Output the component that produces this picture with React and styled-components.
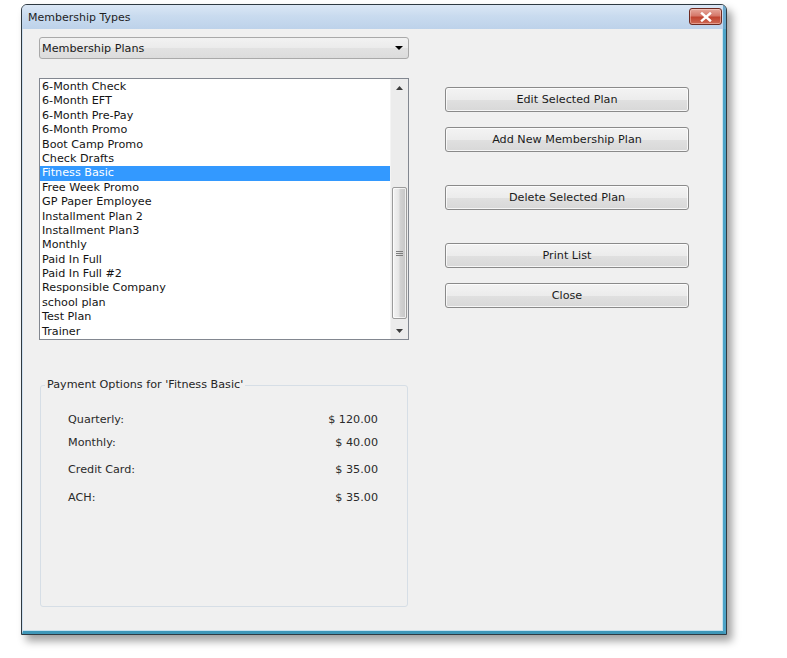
import React from "react";
import styled, { createGlobalStyle } from "styled-components";

const GlobalStyle = createGlobalStyle`
  html, body { margin: 0; padding: 0; background: #ffffff; }
  body { font-family: "DejaVu Sans", "Liberation Sans", sans-serif; }
  * { box-sizing: border-box; }
`;

const Page = styled.div`
  padding: 4px 0 0 21px;
  width: 787px;
  height: 658px;
`;

const Window = styled.div`
  width: 706px;
  height: 631px;
  border: 1px solid #2f3a42;
  border-radius: 6px 6px 0 0;
  background: #c9dcee;
  box-shadow: 5px 6px 9px rgba(0, 0, 0, 0.38);
  display: flex;
  flex-direction: column;
  overflow: hidden;
`;

const TitleBar = styled.div`
  height: 24px;
  flex: none;
  display: flex;
  align-items: flex-start;
  justify-content: space-between;
  padding: 3px 1px 0 6px;
  background: linear-gradient(#dbe7f5 0%, #c9dbef 45%, #bdd2ea 100%);
  border-right: 3px solid #6aa8cc;
`;

const Title = styled.span`
  font-size: 11px;
  line-height: 17px;
  padding-top: 1px;
  color: #1e1e1e;
`;

const CloseButton = styled.div`
  width: 33px;
  height: 17px;
  border: 1px solid #6e2a20;
  border-radius: 3px;
  background: linear-gradient(#e6a89c 0%, #d5786a 45%, #c04431 55%, #cf6a55 100%);
  box-shadow: inset 0 0 0 1px rgba(255, 220, 210, 0.45);
  display: flex;
  align-items: center;
  justify-content: center;
`;

const Frame = styled.div`
  flex: 1;
  display: flex;
  border-left: 1px solid #cfe0ef;
  border-right: 3px solid #4ca3c7;
  border-bottom: 3px solid #3f97b8;
`;

const Client = styled.div`
  flex: 1;
  background: #f0f0f0;
  border-right: 1px solid #c8e2ef;
  border-bottom: 1px solid #c8e2ef;
  display: flex;
  gap: 36px;
  padding: 8px 0 0 16px;
`;

const LeftColumn = styled.div`
  width: 370px;
  display: flex;
  flex-direction: column;
`;

const RightColumn = styled.div`
  width: 244px;
  display: flex;
  flex-direction: column;
`;

const Dropdown = styled.div`
  height: 22px;
  border: 1px solid #a9a9a9;
  border-radius: 3px;
  background: linear-gradient(#f2f2f2 0%, #ebebeb 50%, #e2e2e2 51%, #dcdcdc 100%);
  display: flex;
  align-items: center;
  justify-content: space-between;
  padding: 0 5px 0 2px;
  font-size: 11.2px;
  color: #1a1a1a;
`;

const ListBox = styled.div`
  margin-top: 19px;
  height: 262px;
  border: 1px solid #828790;
  background: #ffffff;
  display: flex;
`;

const Items = styled.div`
  flex: 1;
  padding-top: 1px;
  display: flex;
  flex-direction: column;
`;

const Item = styled.div`
  height: 14.4px;
  line-height: 14.4px;
  font-size: 11.2px;
  padding-left: 2px;
  white-space: nowrap;
  color: ${(p) => (p.$selected ? "#ffffff" : "#141414")};
  background: ${(p) => (p.$selected ? "#3399ff" : "transparent")};
`;

const ScrollBar = styled.div`
  width: 18px;
  display: flex;
  flex-direction: column;
  background: #ececec;
  border-left: 1px solid #f4f4f4;
`;

const ScrollArrow = styled.div`
  height: 17px;
  flex: none;
  display: flex;
  align-items: center;
  justify-content: center;
`;

const Track = styled.div`
  flex: 1;
  padding: 91px 1px 0 1px;
`;

const Thumb = styled.div`
  height: 132px;
  border: 1px solid #9b9b9b;
  border-radius: 2px;
  background: linear-gradient(90deg, #f4f4f4 0%, #e6e6e6 45%, #d2d2d2 55%, #c6c6c6 100%);
  box-shadow: inset 0 0 0 1px rgba(255, 255, 255, 0.7);
  display: flex;
  align-items: center;
  justify-content: center;
`;

const Grip = styled.div`
  width: 7px;
  display: flex;
  flex-direction: column;
  gap: 1px;
`;

const GripLine = styled.div`
  height: 1px;
  background: #7d7d7d;
`;

const GroupBox = styled.fieldset`
  margin: 38px 1px 0 1px;
  height: 229px;
  padding: 0;
  min-width: 0;
  border: 1px solid #d6dee6;
  border-radius: 3px;
`;

const Legend = styled.legend`
  margin-left: 4px;
  padding: 0 2px;
  font-size: 11.2px;
  line-height: 14px;
  color: #262626;
`;

const GroupBody = styled.div`
  display: flex;
  flex-direction: column;
  padding: 0 29px 0 27px;
`;

const PayRow = styled.div`
  margin-top: ${(p) => p.$mt}px;
  height: 16px;
  display: flex;
  align-items: center;
  justify-content: space-between;
  font-size: 11.2px;
  color: #2a2a2a;
`;

const Button = styled.button`
  margin-top: ${(p) => p.$mt}px;
  height: 25px;
  width: 100%;
  border: 1px solid #8a8a8a;
  border-radius: 3px;
  background: linear-gradient(#f3f3f3 0%, #ececec 50%, #e0e0e0 51%, #d8d8d8 100%);
  box-shadow: inset 0 0 0 1px rgba(255, 255, 255, 0.75);
  font-family: "DejaVu Sans", "Liberation Sans", sans-serif;
  font-size: 11.2px;
  color: #1b1b1b;
  padding: 0;
  cursor: default;
`;

const plans = [
  "6-Month Check",
  "6-Month EFT",
  "6-Month Pre-Pay",
  "6-Month Promo",
  "Boot Camp Promo",
  "Check Drafts",
  "Fitness Basic",
  "Free Week Promo",
  "GP Paper Employee",
  "Installment Plan 2",
  "Installment Plan3",
  "Monthly",
  "Paid In Full",
  "Paid In Full #2",
  "Responsible Company",
  "school plan",
  "Test Plan",
  "Trainer",
];

const payments = [
  { label: "Quarterly:", value: "$ 120.00", mt: 19 },
  { label: "Monthly:", value: "$ 40.00", mt: 7 },
  { label: "Credit Card:", value: "$ 35.00", mt: 11 },
  { label: "ACH:", value: "$ 35.00", mt: 12 },
];

const buttons = [
  { label: "Edit Selected Plan", mt: 50 },
  { label: "Add New Membership Plan", mt: 15 },
  { label: "Delete Selected Plan", mt: 33 },
  { label: "Print List", mt: 33 },
  { label: "Close", mt: 15 },
];

const Triangle = ({ up, color = "#000", w = 8, h = 4 }) => (
  <svg width={w} height={h} viewBox={`0 0 ${w} ${h}`}>
    <polygon
      points={up ? `0,${h} ${w},${h} ${w / 2},0` : `0,0 ${w},0 ${w / 2},${h}`}
      fill={color}
    />
  </svg>
);

export default function App() {
  return (
    <Page>
      <GlobalStyle />
      <Window>
        <TitleBar>
          <Title>Membership Types</Title>
          <CloseButton>
            <svg width="12" height="10" viewBox="0 0 12 10">
              <path
                d="M2 1.5 L10 8.5 M10 1.5 L2 8.5"
                stroke="#ffffff"
                strokeWidth="2.4"
                strokeLinecap="square"
              />
            </svg>
          </CloseButton>
        </TitleBar>
        <Frame>
          <Client>
            <LeftColumn>
              <Dropdown>
                <span>Membership Plans</span>
                <Triangle w={8} h={4} />
              </Dropdown>
              <ListBox>
                <Items>
                  {plans.map((p) => (
                    <Item key={p} $selected={p === "Fitness Basic"}>
                      {p}
                    </Item>
                  ))}
                </Items>
                <ScrollBar>
                  <ScrollArrow>
                    <Triangle up w={7} h={4} color="#3c3c3c" />
                  </ScrollArrow>
                  <Track>
                    <Thumb>
                      <Grip>
                        <GripLine />
                        <GripLine />
                        <GripLine />
                      </Grip>
                    </Thumb>
                  </Track>
                  <ScrollArrow>
                    <Triangle w={7} h={4} color="#3c3c3c" />
                  </ScrollArrow>
                </ScrollBar>
              </ListBox>
              <GroupBox>
                <Legend>Payment Options for 'Fitness Basic'</Legend>
                <GroupBody>
                  {payments.map((r) => (
                    <PayRow key={r.label} $mt={r.mt}>
                      <span>{r.label}</span>
                      <span>{r.value}</span>
                    </PayRow>
                  ))}
                </GroupBody>
              </GroupBox>
            </LeftColumn>
            <RightColumn>
              {buttons.map((b) => (
                <Button key={b.label} $mt={b.mt}>
                  {b.label}
                </Button>
              ))}
            </RightColumn>
          </Client>
        </Frame>
      </Window>
    </Page>
  );
}
